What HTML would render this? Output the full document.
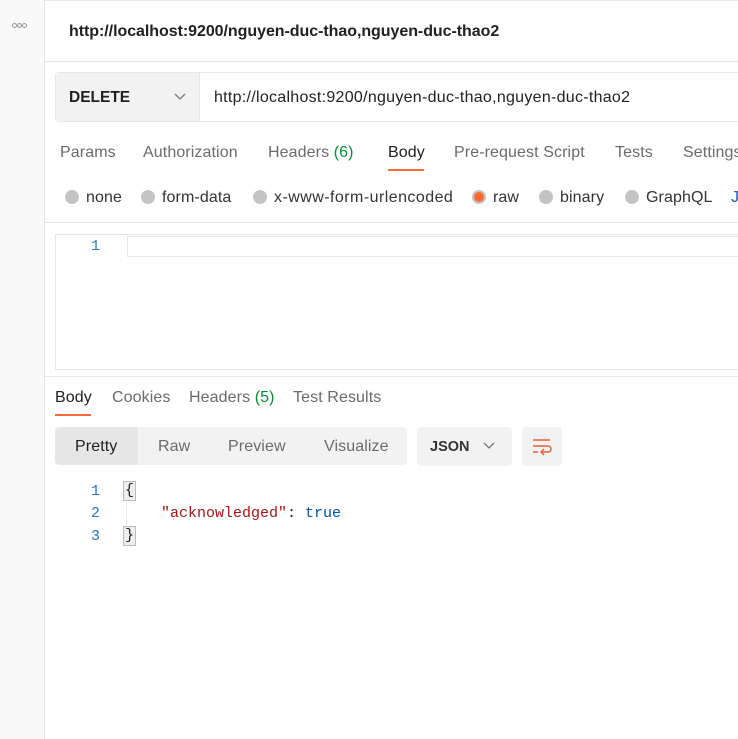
<!DOCTYPE html>
<html><head><style>
body{margin:0;width:738px;height:739px;background:#fff;font-family:"Liberation Sans",sans-serif;position:relative;overflow:hidden;color:#212121}
.a{position:absolute;white-space:nowrap}
.t{font-size:16px;color:#6b6b6b;letter-spacing:0.1px}
.r{width:14px;height:14px;border-radius:50%;background:#c4c4c4;position:absolute}
.m{font-family:"Liberation Mono",monospace;font-size:15px}
.d{position:absolute;width:3px;height:3px;border:1px solid #999;border-radius:50%;top:23px}
</style></head><body>
<div class="a" style="left:0;top:0;width:44px;height:739px;background:#f9f9f9;border-right:1px solid #e6e6e6"></div>
<div class="d" style="left:12px"></div><div class="d" style="left:17px"></div><div class="d" style="left:22px"></div>
<div class="a" style="left:45px;top:0;width:693px;height:1px;background:#e6e6e6"></div>
<div class="a" style="left:69px;top:23px;font-size:16px;font-weight:bold;color:#212121;letter-spacing:-0.05px">http://localhost:9200/nguyen-duc-thao,nguyen-duc-thao2</div>
<div class="a" style="left:45px;top:61px;width:693px;height:1px;background:#e6e6e6"></div>
<div class="a" style="left:55px;top:72px;width:690px;height:48px;border:1px solid #e6e6e6;border-radius:4px"></div>
<div class="a" style="left:56px;top:73px;width:143px;height:48px;background:#f2f2f2;border-right:1px solid #e6e6e6"></div>
<div class="a" style="left:69px;top:89px;font-size:15.5px;font-weight:bold">DELETE</div>
<svg class="a" style="left:173px;top:92px" width="14" height="10"><path d="M2 2l5 5 5-5" fill="none" stroke="#777" stroke-width="1.3"/></svg>
<div class="a" style="left:214px;top:89px;font-size:16px;letter-spacing:0.28px">http://localhost:9200/nguyen-duc-thao,nguyen-duc-thao2</div>
<div class="a t" style="left:60px;top:144px">Params</div>
<div class="a t" style="left:143px;top:144px">Authorization</div>
<div class="a t" style="left:268px;top:144px">Headers <span style="color:#0a8a3a">(6)</span></div>
<div class="a t" style="left:388px;top:144px;color:#212121">Body</div>
<div class="a" style="left:388px;top:169px;width:36px;height:2px;background:#ff6c37"></div>
<div class="a t" style="left:454px;top:144px">Pre-request Script</div>
<div class="a t" style="left:615px;top:144px">Tests</div>
<div class="a t" style="left:683px;top:144px">Settings</div>
<div class="r" style="left:65px;top:190px"></div><div class="a t" style="left:86px;top:189px;color:#333">none</div>
<div class="r" style="left:141px;top:190px"></div><div class="a t" style="left:162px;top:189px;color:#333">form-data</div>
<div class="r" style="left:253px;top:190px"></div><div class="a t" style="left:274px;top:189px;color:#333;letter-spacing:0.45px">x-www-form-urlencoded</div>
<div class="r" style="left:472px;top:190px;background:#ff6c37;box-sizing:border-box;border:2px solid #c4c4c4"></div><div class="a t" style="left:493px;top:189px;color:#333">raw</div>
<div class="r" style="left:539px;top:190px"></div><div class="a t" style="left:560px;top:189px;color:#333">binary</div>
<div class="r" style="left:625px;top:190px"></div><div class="a t" style="left:646px;top:189px;color:#333">GraphQL</div>
<div class="a t" style="left:731px;top:189px;color:#1a55c8">J</div>
<div class="a" style="left:45px;top:222px;width:693px;height:1px;background:#e6e6e6"></div>
<div class="a" style="left:55px;top:234px;width:690px;height:134px;border:1px solid #e6e6e6"></div>
<div class="a" style="left:127px;top:236px;width:620px;height:19px;border:1px solid #e6e6e6"></div>
<div class="a m" style="left:91px;top:238px;color:#2a7ab0">1</div>
<div class="a" style="left:45px;top:376px;width:693px;height:1px;background:#e6e6e6"></div>
<div class="a t" style="left:55px;top:389px;color:#212121">Body</div>
<div class="a" style="left:55px;top:414px;width:36px;height:2px;background:#ff6c37"></div>
<div class="a t" style="left:112px;top:389px">Cookies</div>
<div class="a t" style="left:189px;top:389px">Headers <span style="color:#0a8a3a">(5)</span></div>
<div class="a t" style="left:293px;top:389px">Test Results</div>
<div class="a" style="left:55px;top:427px;width:352px;height:38px;background:#f2f2f2;border-radius:4px"></div>
<div class="a" style="left:55px;top:427px;width:83px;height:38px;background:#e6e6e6;border-radius:4px 0 0 4px"></div>
<div class="a t" style="left:75px;top:438px;color:#212121">Pretty</div>
<div class="a t" style="left:158px;top:438px">Raw</div>
<div class="a t" style="left:228px;top:438px">Preview</div>
<div class="a t" style="left:324px;top:438px">Visualize</div>
<div class="a" style="left:417px;top:427px;width:95px;height:39px;background:#f2f2f2;border-radius:4px"></div>
<div class="a" style="left:430px;top:439px;font-size:14.5px;font-weight:bold;color:#333">JSON</div>
<svg class="a" style="left:482px;top:441px" width="14" height="10"><path d="M2 2l5 5 5-5" fill="none" stroke="#777" stroke-width="1.3"/></svg>
<div class="a" style="left:522px;top:427px;width:40px;height:39px;background:#f2f2f2;border-radius:4px"></div>
<svg class="a" style="left:530px;top:437px" width="24" height="20"><path d="M3 3h17M3 9h15a3 3 0 0 1 0 6h-6M3 15h5M14 12l-3 3 3 3" fill="none" stroke="#e8603a" stroke-width="1.5"/></svg>
<div class="a m" style="left:91px;top:483px;color:#2a7ab0">1</div>
<div class="a m" style="left:91px;top:505px;color:#2a7ab0">2</div>
<div class="a m" style="left:91px;top:528px;color:#2a7ab0">3</div>
<div class="a" style="left:126px;top:482px;width:1px;height:64px;background:#eee"></div>
<div class="a m" style="left:123px;top:481px;border:1px solid #bbb;background:#eee;padding:0 1px;line-height:18px">{</div>
<div class="a m" style="left:161px;top:505px"><span style="color:#a31515">"acknowledged"</span>: <span style="color:#0451a5">true</span></div>
<div class="a m" style="left:123px;top:526px;border:1px solid #bbb;background:#eee;padding:0 1px;line-height:18px">}</div>
</body></html>
